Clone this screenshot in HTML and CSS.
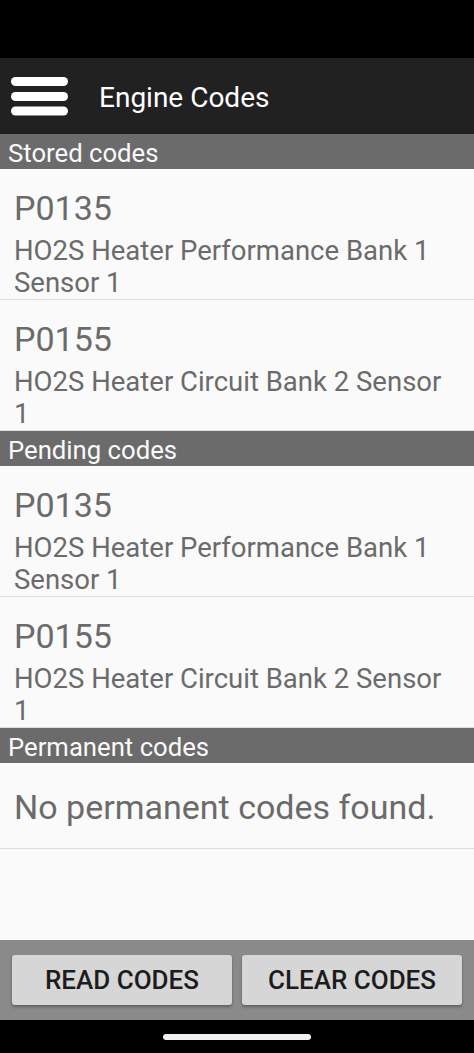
FILE: index.html
```html
<!DOCTYPE html>
<html lang="en">
<head>
<meta charset="utf-8">
<title>Engine Codes</title>
<link rel="stylesheet" href="styles.css">
</head>
<body>
<div class="app">
  <div class="status-bar"></div>
  <header class="toolbar">
    <svg class="menu-icon" width="57" height="39" viewBox="0 0 57 39" aria-hidden="true">
      <rect x="0" y="0" width="57" height="9" rx="4.5" fill="#fff"/>
      <rect x="0" y="15" width="57" height="9" rx="4.5" fill="#fff"/>
      <rect x="0" y="29.5" width="57" height="9" rx="4.5" fill="#fff"/>
    </svg>
    <h1 class="title">Engine Codes</h1>
  </header>
  <main class="list">
    <div class="section-header">Stored codes</div>
    <div class="code-item">
      <div class="code">P0135</div>
      <div class="desc">HO2S Heater Performance Bank 1 Sensor 1</div>
    </div>
    <div class="code-item">
      <div class="code">P0155</div>
      <div class="desc">HO2S Heater Circuit Bank 2 Sensor 1</div>
    </div>
    <div class="section-header">Pending codes</div>
    <div class="code-item">
      <div class="code">P0135</div>
      <div class="desc">HO2S Heater Performance Bank 1 Sensor 1</div>
    </div>
    <div class="code-item">
      <div class="code">P0155</div>
      <div class="desc">HO2S Heater Circuit Bank 2 Sensor 1</div>
    </div>
    <div class="section-header">Permanent codes</div>
    <div class="empty-item">No permanent codes found.</div>
  </main>
  <footer class="actions">
    <button class="btn">READ CODES</button>
    <button class="btn">CLEAR CODES</button>
  </footer>
  <div class="nav-bar"><span class="home-pill"></span></div>
</div>
</body>
</html>
```

FILE: styles.css
```css
* { box-sizing: border-box; }
html, body { margin: 0; padding: 0; }
body {
  font-family: Roboto, "Liberation Sans", sans-serif;
  background: #000;
}
.app {
  display: flex;
  flex-direction: column;
  height: 1053px;
  width: 474px;
}
.status-bar {
  height: 58px;
  background: #000;
  flex: none;
}
.toolbar {
  height: 76px;
  flex: none;
  background: #212121;
  display: flex;
  align-items: center;
  padding-left: 11px;
}
.menu-icon { display: block; margin-top: 1px; }
.title {
  margin: 4px 0 0 31px;
  font-size: 28px;
  font-weight: 400;
  color: #fff;
  line-height: 1;
}
.list {
  flex: 1;
  background: #fafafa;
  display: flex;
  flex-direction: column;
}
.section-header {
  height: 35px;
  background: #6b6b6b;
  color: #fafafa;
  font-size: 25.7px;
  line-height: 31px;
  padding: 4px 0 0 8px;
}
.code-item {
  height: 131px;
  padding: 14px 14px 0;
  border-bottom: 1px solid #dcdcdc;
  color: #6b6b6b;
}
.code {
  font-size: 34px;
  line-height: 50px;
  margin-bottom: 2px;
}
.desc {
  font-size: 27.5px;
  line-height: 32px;
}
.empty-item {
  height: 86px;
  padding: 3px 14px 0;
  display: flex;
  align-items: center;
  font-size: 34px;
  color: #6b6b6b;
  border-bottom: 1px solid #dcdcdc;
}
.actions {
  height: 80px;
  flex: none;
  background: #8a8a8a;
  display: flex;
  gap: 10px;
  padding: 15px 12px 0;
}
.btn {
  flex: 1;
  height: 50px;
  border: none;
  border-radius: 3px;
  background: #d6d6d6;
  color: #1c1c1c;
  font-family: Roboto, "Liberation Sans", sans-serif;
  font-size: 26px;
  font-weight: 500;
  box-shadow: 0 2px 3px rgba(0,0,0,0.3);
  padding: 0;
}
.nav-bar {
  height: 33px;
  flex: none;
  background: #000;
  display: flex;
  justify-content: center;
  padding-top: 14px;
}
.home-pill {
  width: 148px;
  height: 6px;
  border-radius: 3px;
  background: #f0f0f0;
}
```
